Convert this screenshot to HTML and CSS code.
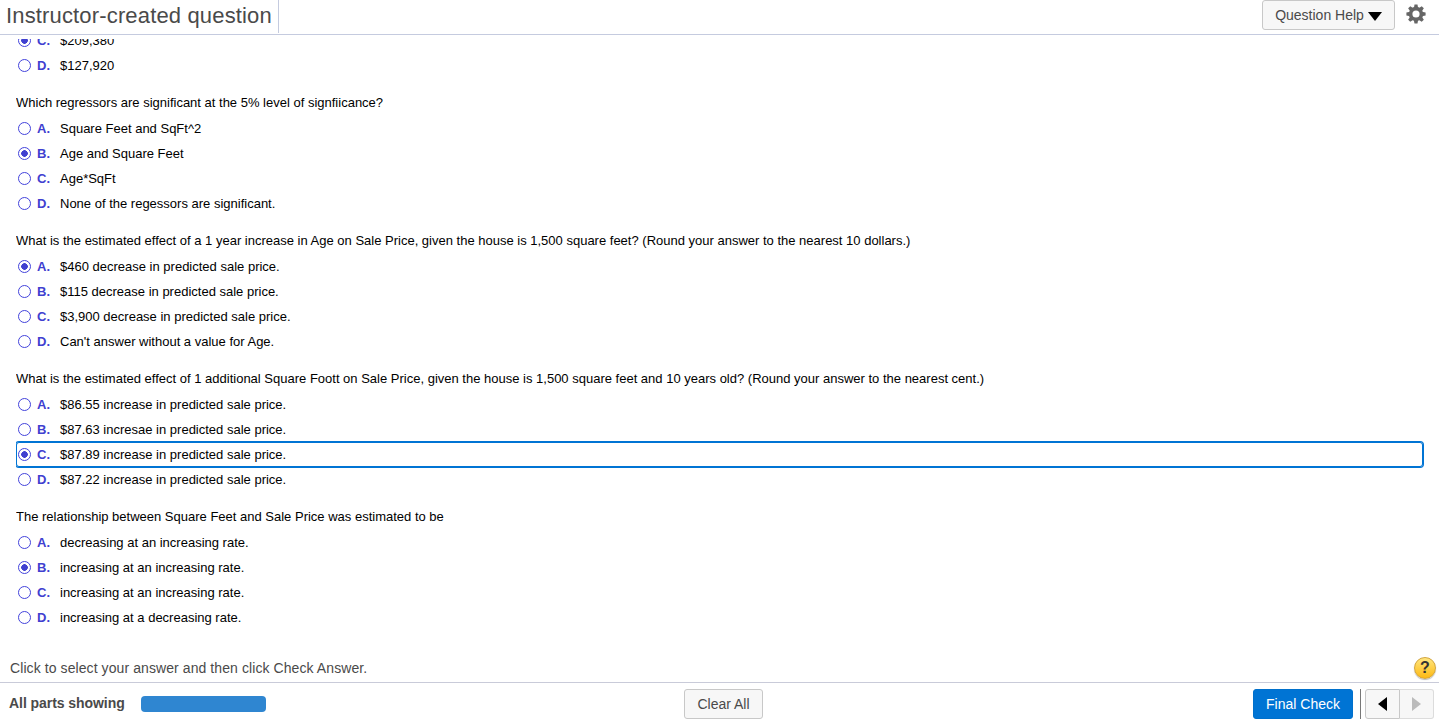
FILE: index.html
```html
<!DOCTYPE html>
<html lang="en">
<head>
<meta charset="utf-8">
<title>Instructor-created question</title>
<link rel="stylesheet" href="styles.css">
</head>
<body>

<header class="header">
  <h1 class="title">Instructor-created question</h1>
  <div class="header-tools">
    <button class="btn btn-help" type="button">Question Help
      <svg class="caret" width="14" height="9" viewBox="0 0 14 9"><path d="M0 0h14L7 9z"/></svg>
    </button>
    <svg class="gear" width="20" height="20" viewBox="0 0 20 20">
      <g fill="#666">
        <path id="tooth" d="M7.8 4.2L8.5 .4h3l.7 3.8z"/>
        <use href="#tooth" transform="rotate(45 10 10)"/>
        <use href="#tooth" transform="rotate(90 10 10)"/>
        <use href="#tooth" transform="rotate(135 10 10)"/>
        <use href="#tooth" transform="rotate(180 10 10)"/>
        <use href="#tooth" transform="rotate(225 10 10)"/>
        <use href="#tooth" transform="rotate(270 10 10)"/>
        <use href="#tooth" transform="rotate(315 10 10)"/>
      </g>
      <circle cx="10" cy="10" r="5.4" fill="none" stroke="#666" stroke-width="3.6"/>
    </svg>
  </div>
</header>

<main class="content">
  <div class="questions">
    <label class="option"><input type="radio" name="q1" checked><b>C.</b><span>$209,380</span></label>
    <label class="option"><input type="radio" name="q1"><b>D.</b><span>$127,920</span></label>

    <p class="question">Which regressors are significant at the 5% level of signfiicance?</p>
    <label class="option"><input type="radio" name="q2"><b>A.</b><span>Square Feet and SqFt^2</span></label>
    <label class="option"><input type="radio" name="q2" checked><b>B.</b><span>Age and Square Feet</span></label>
    <label class="option"><input type="radio" name="q2"><b>C.</b><span>Age*SqFt</span></label>
    <label class="option"><input type="radio" name="q2"><b>D.</b><span>None of the regessors are significant.</span></label>

    <p class="question">What is the estimated effect of a 1 year increase in Age on Sale Price, given the house is 1,500 square feet? (Round your answer to the nearest 10 dollars.)</p>
    <label class="option"><input type="radio" name="q3" checked><b>A.</b><span>$460 decrease in predicted sale price.</span></label>
    <label class="option"><input type="radio" name="q3"><b>B.</b><span>$115 decrease in predicted sale price.</span></label>
    <label class="option"><input type="radio" name="q3"><b>C.</b><span>$3,900 decrease in predicted sale price.</span></label>
    <label class="option"><input type="radio" name="q3"><b>D.</b><span>Can't answer without a value for Age.</span></label>

    <p class="question">What is the estimated effect of 1 additional Square Foott on Sale Price, given the house is 1,500 square feet and 10 years old? (Round your answer to the nearest cent.)</p>
    <label class="option"><input type="radio" name="q4"><b>A.</b><span>$86.55 increase in predicted sale price.</span></label>
    <label class="option"><input type="radio" name="q4"><b>B.</b><span>$87.63 incresae in predicted sale price.</span></label>
    <label class="option option-focus"><input type="radio" name="q4" checked><b>C.</b><span>$87.89 increase in predicted sale price.</span></label>
    <label class="option"><input type="radio" name="q4"><b>D.</b><span>$87.22 increase in predicted sale price.</span></label>

    <p class="question">The relationship between Square Feet and Sale Price was estimated to be</p>
    <label class="option"><input type="radio" name="q5"><b>A.</b><span>decreasing at an increasing rate.</span></label>
    <label class="option"><input type="radio" name="q5" checked><b>B.</b><span>increasing at an increasing rate.</span></label>
    <label class="option"><input type="radio" name="q5"><b>C.</b><span>increasing at an increasing rate.</span></label>
    <label class="option"><input type="radio" name="q5"><b>D.</b><span>increasing at a decreasing rate.</span></label>
  </div>
</main>

<div class="hint">
  <span>Click to select your answer and then click Check Answer.</span>
  <button class="help" type="button">?</button>
</div>

<footer class="footer">
  <div class="parts">
    <span>All parts showing</span>
    <div class="progress"></div>
  </div>
  <button class="btn btn-clear" type="button">Clear All</button>
  <div class="actions">
    <button class="btn btn-primary" type="button">Final Check</button>
    <div class="pager">
      <button class="btn" type="button"><svg width="9" height="14" viewBox="0 0 9 14"><path d="M9 0v14L0 7z"/></svg></button>
      <button class="btn" type="button" disabled><svg width="9" height="14" viewBox="0 0 9 14"><path d="M0 0v14l9-7z"/></svg></button>
    </div>
  </div>
</footer>

</body>
</html>
```
FILE: styles.css
```css
*, *:before, *:after {
  box-sizing: border-box;
}

body {
  display: flex;
  flex-direction: column;
  height: 725px;
  margin: 0;
  overflow: hidden;
  background: #fff;
  color: #4a4a4a;
  font: 14px/20px "Liberation Sans", Arial, sans-serif;
}

button {
  font: inherit;
  color: inherit;
}

/* header */
.header {
  display: flex;
  justify-content: space-between;
  flex: none;
  height: 35px;
  border-bottom: 1px solid #c5cbdf;
}
.title {
  height: 33px;
  margin: 0;
  padding: 0 6px;
  border-right: 1px solid #c5cbdf;
  font-size: 22px;
  font-weight: normal;
  line-height: 31px;
  letter-spacing: .155px;
  white-space: nowrap;
}
.header-tools {
  display: flex;
  align-items: flex-start;
  padding-right: 13px;
}
.btn {
  display: flex;
  align-items: center;
  justify-content: center;
  height: 30px;
  padding: 0;
  border: 1px solid #c8c8c8;
  border-radius: 3px;
  background: #f7f7f7;
}
.btn-help {
  width: 133px;
  gap: 4px;
}
.caret {
  margin-top: 2px;
}
.gear {
  margin: 4px 0 0 11px;
}

/* questions */
.content {
  flex: 1;
  min-height: 0;
  margin: 4px 15px 0 16px;
  overflow: hidden;
  color: #000;
  font-size: 13px;
}
.questions {
  margin-top: -11px;
}
.question {
  height: 38px;
  margin: 0;
  padding-top: 15px;
  line-height: 20px;
  white-space: nowrap;
}
.option {
  display: flex;
  align-items: center;
  height: 25px;
  padding-left: 2px;
}
.option input {
  appearance: none;
  width: 13px;
  height: 13px;
  margin: 0 6px 0 0;
  border: 1px solid #4343dc;
  border-radius: 50%;
}
.option input:checked {
  background: radial-gradient(circle, #4040d0 3px, transparent 3.6px) border-box;
}
.option b {
  width: 23px;
  color: #4040d0;
}
.option-focus {
  border-radius: 3px;
  box-shadow: inset 0 0 0 1px #0074d4, 0 0 0 1px #0074d4;
}
.option-focus {
  margin-right: 1px;
}

/* hint line */
.hint {
  display: flex;
  align-items: center;
  justify-content: space-between;
  flex: none;
  height: 29px;
  padding: 0 3px 0 10px;
  letter-spacing: .085px;
}
.help {
  width: 22px;
  height: 22px;
  padding: 0;
  border: 1px solid #d3a53c;
  border-radius: 50%;
  background: linear-gradient(#ffe680, #fdb913);
  box-shadow: 0 1px 1px #bbb;
  color: #333;
  font-size: 16px;
  font-weight: bold;
  line-height: 20px;
}

/* footer */
.footer {
  display: grid;
  grid-template-columns: 1fr 79px 1fr;
  align-items: start;
  flex: none;
  height: 43px;
  padding: 6px 5px 0 9px;
  border-top: 1px solid #c9cbd9;
}
.parts {
  display: flex;
  align-items: center;
  height: 30px;
  gap: 16px;
  font-weight: bold;
}
.parts span {
  margin-bottom: 2px;
  letter-spacing: -.06px;
}
.progress {
  width: 125px;
  height: 16px;
  border-radius: 4px;
  background: #2f86d1;
}
.btn-clear {
  margin: 0 -2px 0 2px;
}
.actions {
  display: flex;
  justify-content: flex-end;
}
.btn-primary {
  width: 100px;
  border-color: #0070cc;
  background: #0074d4;
  color: #fff;
}
.pager {
  display: flex;
  margin-left: 7px;
  padding-left: 4px;
  border-left: 1px solid #777;
}
.pager .btn {
  width: 35px;
  border-radius: 3px 0 0 3px;
}
.pager .btn + .btn {
  width: 34px;
  border-color: #dcdcdc;
  border-left: 0;
  border-radius: 0 3px 3px 0;
  fill: #bbb;
}
```
